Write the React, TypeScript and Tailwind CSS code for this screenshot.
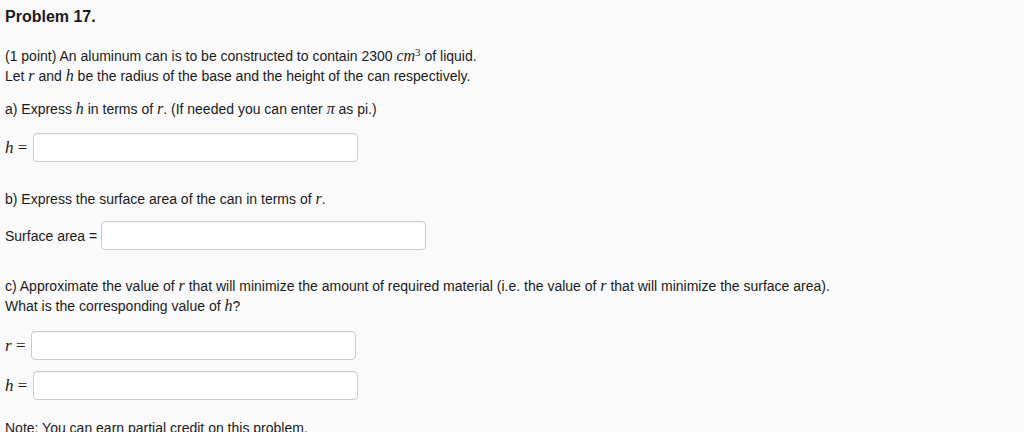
const serif = { fontFamily: '"Liberation Serif", "Times New Roman", serif' }

function M({ children }: { children: React.ReactNode }) {
    return <span className="italic text-[16px]" style={serif}>{children}</span>
}

function AnswerRow({ label }: { label: React.ReactNode }) {
    return (
        <div className="flex items-center h-[29px]">
            <span className="mr-[1px]">{label}</span>
            <div className="w-[325px] h-[29px] bg-white border border-[#cccccc] rounded-[4px] shadow-[inset_0_1px_1px_rgba(0,0,0,0.05)]" />
        </div>
    )
}

function MathLabel({ v }: { v: string }) {
    return (
        <span style={serif} className="text-[17px] whitespace-pre">
            <i>{v}</i>{' = '}
        </span>
    )
}

export default function App() {
    return (
        <div className="w-[1024px] h-[432px] overflow-hidden bg-[#fafafa] text-[#1a1a1a] text-[14px] leading-[20px] px-[5px]"
            style={{ fontFamily: '"Liberation Sans", Arial, sans-serif' }}>
            <h1 className="font-bold text-[16px] pt-[8px] leading-[18px]">Problem 17.</h1>

            <p className="mt-[20px]">
                (1 point) An aluminum can is to be constructed to contain 2300 <M>cm</M><sup className="text-[11px]" style={serif}>3</sup> of liquid.
            </p>
            <p>Let <M>r</M> and <M>h</M> be the radius of the base and the height of the can respectively.</p>

            <p className="mt-[13px]">a) Express <M>h</M> in terms of <M>r</M>. (If needed you can enter <M>π</M> as pi.)</p>

            <div className="mt-[14px]">
                <AnswerRow label={<MathLabel v="h" />} />
            </div>

            <p className="mt-[27px]">b) Express the surface area of the can in terms of <M>r</M>.</p>

            <div className="mt-[12px]">
                <AnswerRow label={<span className="mr-[3px]">Surface area =</span>} />
            </div>

            <p className="mt-[26px]">c) Approximate the value of <M>r</M> that will minimize the amount of required material (i.e. the value of <M>r</M> that will minimize the surface area).</p>
            <p>What is the corresponding value of <M>h</M>?</p>

            <div className="mt-[15px] flex flex-col gap-[11px]">
                <AnswerRow label={<MathLabel v="r" />} />
                <AnswerRow label={<MathLabel v="h" />} />
            </div>

            <p className="mt-[18px]">Note: You can earn partial credit on this problem.</p>
        </div>
    )
}
